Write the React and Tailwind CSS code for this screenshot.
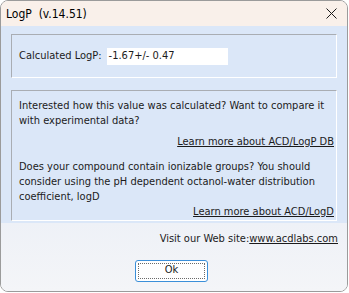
import React from "react";

const font = { fontFamily: "Tahoma, 'DejaVu Sans Condensed', 'Liberation Sans', sans-serif" };

const GroupBox = ({ className = "", children }) => (
  <div
    className={`mx-[10px] shrink-0 border-t border-l border-t-[#a9adb3] border-l-[#a9adb3] border-r border-b border-r-white border-b-white ${className}`}
  >
    {children}
  </div>
);

const CloseIcon = () => (
  <svg width="11" height="11" viewBox="0 0 11 11" className="text-[#1a1a1a]">
    <path d="M0.5 0.5 L10.5 10.5 M10.5 0.5 L0.5 10.5" stroke="currentColor" strokeWidth="1" fill="none" />
  </svg>
);

export default function App() {
  return (
    <div className="h-[293px] w-[349px] bg-white text-[11px] text-[#1b1b1b]" style={font}>
      <div className="flex h-[292px] w-[348px] flex-col overflow-hidden rounded-[8px] border border-[#9b9b9b]">
        <div className="flex h-[25px] shrink-0 items-center justify-between bg-[#f9f0ea] pl-[5px] pr-[10px]">
          <span className="text-[12px] text-black">LogP&nbsp;&nbsp;(v.14.51)</span>
          <CloseIcon />
        </div>

        <div className="flex h-[197px] shrink-0 flex-col bg-[#dbe7f8] pt-[8px]">
          <GroupBox className="flex h-[44px] items-center gap-[5px] pl-[7px]">
            <span>Calculated LogP:</span>
            <span className="flex h-[17px] w-[121px] items-center bg-white pl-[2px]">-1.67+/- 0.47</span>
          </GroupBox>

          <GroupBox className="mt-[12px] h-[131px] pl-[7px] pr-[2px] pt-[7px] leading-[15px]">
            <p>Interested how this value was calculated? Want to compare it with experimental data?</p>
            <p className="mt-[6px] text-right underline">Learn more about ACD/LogP DB</p>
            <p className="mt-[10px]">
              Does your compound contain ionizable groups? You should consider using the pH dependent
              octanol-water distribution coefficient, logD
            </p>
            <p className="text-right underline">Learn more about ACD/LogD</p>
          </GroupBox>
        </div>

        <div className="flex flex-1 flex-col items-end bg-gradient-to-b from-[#eef1f7] to-[#f4f5f8] pr-[9px] pt-[8px]">
          <p>
            Visit our Web site:<span className="underline">www.acdlabs.com</span>
          </p>
          <div className="flex w-full justify-center pl-[4px] pt-[12px]">
            <button className="flex h-[22px] w-[73px] items-center justify-center rounded-[3px] border border-[#3b8fd9] bg-white p-[2px]">
              <span className="flex h-full w-full items-center justify-center border border-dotted border-[#6b6b6b]">Ok</span>
            </button>
          </div>
        </div>
      </div>
    </div>
  );
}
